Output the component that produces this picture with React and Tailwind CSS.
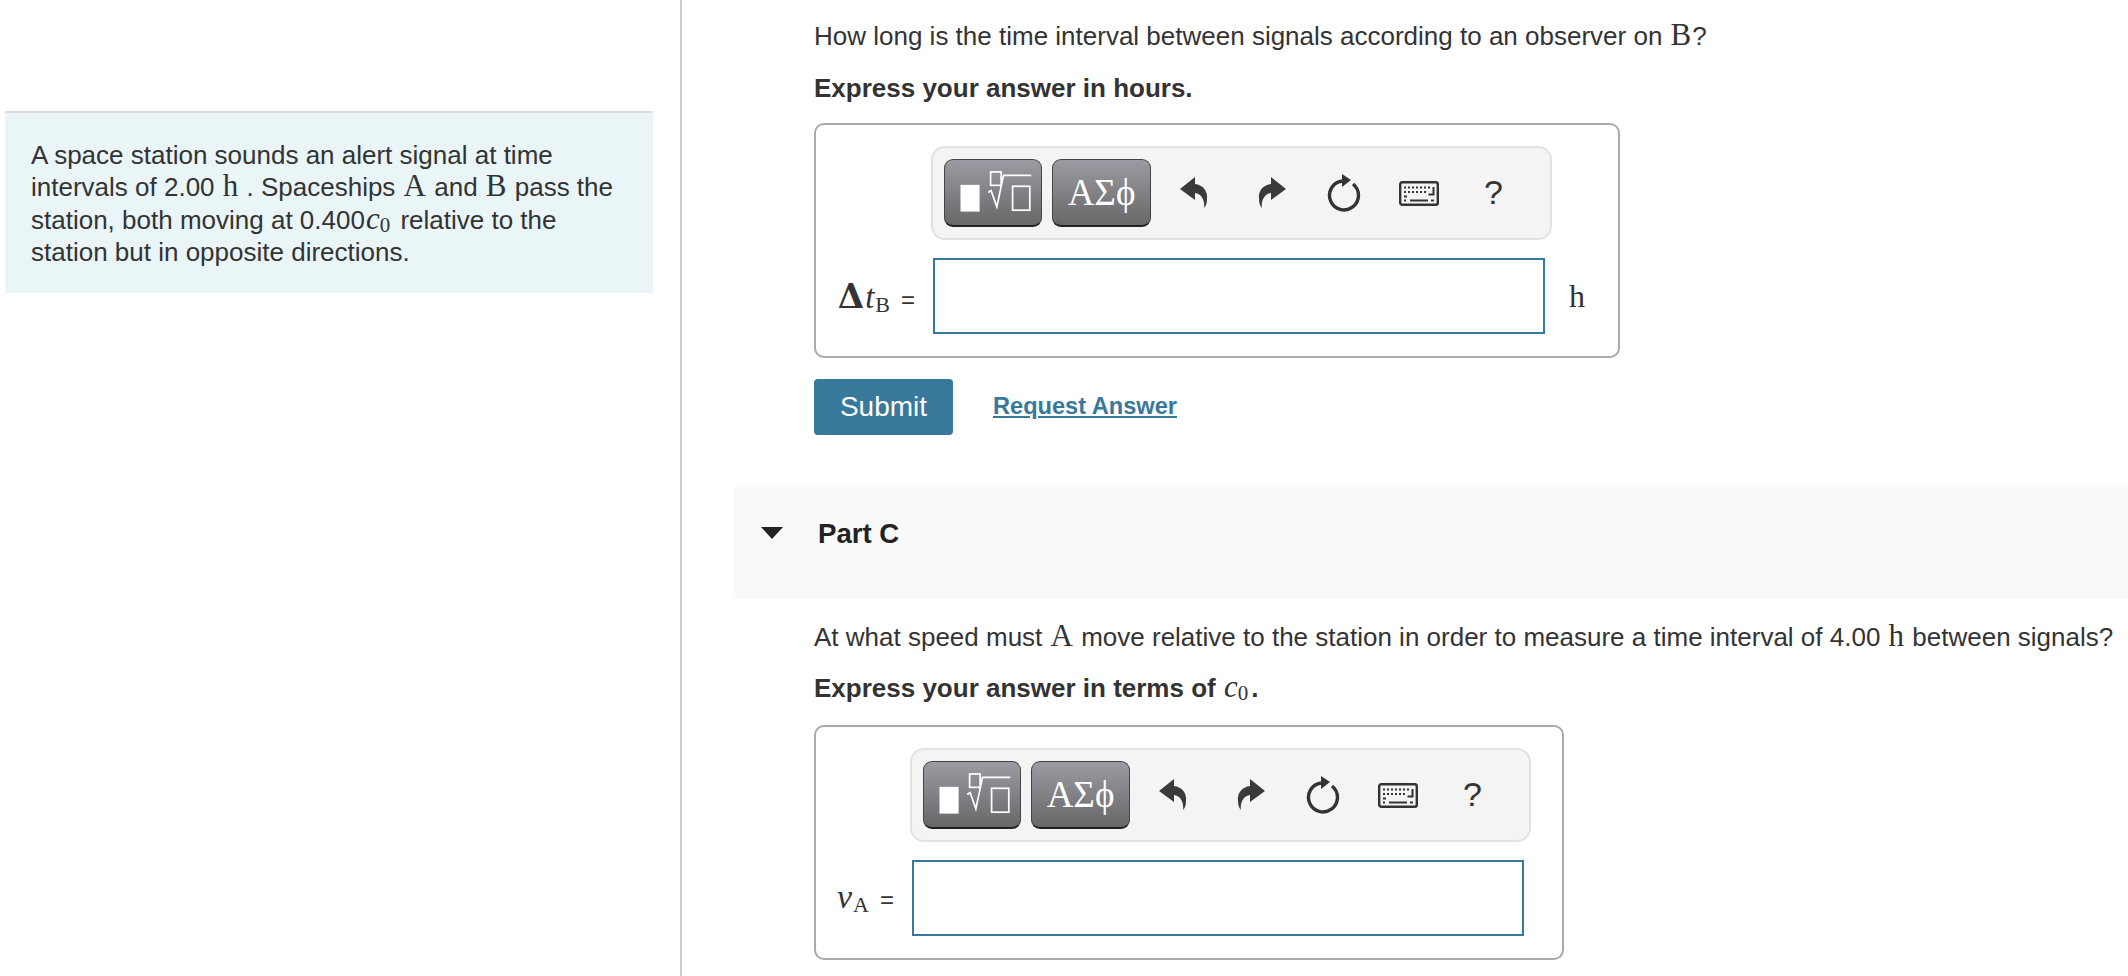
import React from 'react';

const sans = { fontFamily: '"Liberation Sans", Arial, sans-serif' };

// Math bits in the prompt text
const M = ({ children }) => (
  <span className="mx-[1px] font-['Liberation_Serif',serif] text-[31px] font-normal leading-[0]">{children}</span>
);
const C0 = () => (
  <span className="mr-[3px] ml-[1px] font-['Liberation_Serif',serif] text-[31px] font-normal leading-[0]">
    <i>c</i>
    <sub className="-bottom-[3px] text-[21px] leading-[0]">0</sub>
  </span>
);

const FormulaIcon = () => (
  <svg width="96" height="65" viewBox="0 0 98 68" fill="none">
    <rect x="15" y="26" width="20" height="28" fill="#fff" />
    <rect x="46.5" y="12.5" width="11" height="14" stroke="#fff" strokeWidth="1.8" />
    <path d="M44 34l3-2 6 17 7-33h29" stroke="#fff" strokeWidth="1.8" />
    <rect x="69.5" y="27.5" width="18" height="25" stroke="#fff" strokeWidth="1.8" />
  </svg>
);

const Undo = ({ flip }) => (
  <svg width="28" height="32" viewBox="0 0 28 32" className={flip ? 'translate-x-[3px] -scale-x-100' : ''}>
    <path d="M0 12L15 0v7c8 1 13 7 12 15 0 4-1 7-3 9 1-5-1-14-9-15v7z" fill="#3a3a3a" />
  </svg>
);

const Reset = () => (
  <svg width="34" height="38" viewBox="0 0 34 38" fill="none">
    <path d="M15 7A14.5 14.5 0 1 0 26 10" stroke="#333" strokeWidth="3.4" />
    <path d="M15 0l9 6-9 7z" fill="#333" />
  </svg>
);

const KeyboardIcon = () => (
  <svg width="40" height="25" viewBox="0 0 40 25" fill="none">
    <rect x="1.2" y="1.2" width="37.6" height="22.6" rx="2" fill="#f4f4f4" stroke="#333" strokeWidth="2.4" />
    <path d="M5 6.5h28M5 11h24" stroke="#333" strokeWidth="2" strokeDasharray="2 2" />
    <path d="M34.5 6v7.5h-5M5 15.5h3M5 19.5h2M11 19.5h18M32 19.5h3" stroke="#333" strokeWidth="2" />
  </svg>
);

const MathButton = ({ children, w }) => (
  <div
    className={`flex h-[68px] items-center justify-center rounded-[9px] border border-b-2 border-[#444] border-b-[#222] bg-gradient-to-b from-[#9b9ba3] to-[#68686a] ${w}`}
  >
    {children}
  </div>
);

const Slot = ({ children }) => <div className="flex h-full w-[75px] items-center justify-center">{children}</div>;

const AnswerBox = ({ label, unit, width, indent, labelWidth }) => (
  <div className={`rounded-[10px] border-2 border-[#aaa] pt-[21px] pb-[22px] ${width}`}>
    <div className={`flex h-[94px] w-[621px] items-center rounded-[14px] border-2 border-[#e2e2e2] bg-[#f4f4f4] pl-[11px] ${indent}`}>
      <MathButton w="w-[98px]">
        <FormulaIcon />
      </MathButton>
      <div className="w-[10px]" />
      <MathButton w="w-[99px]">
        <span className="font-['Liberation_Serif',serif] text-[37px] leading-none text-white">ΑΣϕ</span>
      </MathButton>
      <div className="ml-[5px] flex h-full items-center">
        <Slot><Undo /></Slot>
        <Slot><Undo flip /></Slot>
        <Slot><Reset /></Slot>
        <Slot><KeyboardIcon /></Slot>
        <Slot><span className="-mt-[2px] text-[34px] text-[#333]">?</span></Slot>
      </div>
    </div>
    <div className="mt-[18px] flex h-[76px] items-center">
      <div className={`flex items-center justify-end pr-[18px] ${labelWidth}`}>{label}</div>
      <div className="h-full w-[612px] border-2 border-[#37789b] bg-white" />
      {unit && <span className="ml-[24px] font-['Liberation_Serif',serif] text-[32px] text-[#333]">{unit}</span>}
    </div>
  </div>
);

export default function App() {
  return (
    <div className="flex h-[976px] w-[2128px] overflow-hidden bg-white text-[26px] text-[#333]" style={sans}>
      {/* left column */}
      <div className="h-full w-[682px] shrink-0 border-r-2 border-[#c3d0dc] pt-[111px] pl-[5px]">
        <div className="h-[182px] w-[648px] border-t-2 border-[#dddddd] bg-[#e9f5f7] pt-[26px] pl-[26px] pr-[20px] text-[26px] leading-[32.4px]">
          A space station sounds an alert signal at time intervals of 2.00 <M>h</M> . Spaceships <M>A</M> and <M>B</M> pass the
          station, both moving at 0.400<C0 /> relative to the station but in opposite directions.
        </div>
      </div>

      {/* right column */}
      <div className="min-w-0 flex-1 pt-[20px]">
        <div className="pl-[132px]">
          <p className="h-[32px] leading-[32px] whitespace-nowrap">
            How long is the time interval between signals according to an observer on <M>B</M>?
          </p>
          <p className="mt-[20px] h-[32px] font-bold leading-[32px]">Express your answer in hours.</p>
          <div className="mt-[19px]">
            <AnswerBox
              width="w-[806px]"
              indent="ml-[115px]"
              labelWidth="w-[117px]"
              unit="h"
              label={
                <span className="flex items-baseline whitespace-nowrap font-['Liberation_Serif',serif] text-[33px] leading-none">
                  <span className="font-['DejaVu_Serif',serif] text-[34px] font-bold">Δ</span>
                  <i className="ml-[1px]">t</i>
                  <span className="relative top-[4px] ml-[1px] text-[22px]">B</span>
                  <span className="ml-[11px] font-['Liberation_Sans',sans-serif] text-[24px]">=</span>
                </span>
              }
            />
          </div>
          <div className="mt-[21px] flex items-center">
            <div className="flex h-[56px] w-[139px] items-center justify-center rounded-[4px] bg-[#37789b] text-[28px] text-white">Submit</div>
            <a className="ml-[40px] text-[23.6px] font-bold text-[#37789b] underline">Request Answer</a>
          </div>
        </div>

        <div className="mt-[52px] ml-[51px] flex h-[112px] bg-[#f9f9f9] pt-[33px]">
          <svg width="22" height="12" viewBox="0 0 22 12" className="mt-[7px] ml-[28px]">
            <path d="M0 0h22L11 12z" fill="#222" />
          </svg>
          <span className="ml-[35px] text-[27.6px] font-bold leading-[28px] text-[#222]">Part C</span>
        </div>

        <div className="pl-[132px]">
          <p className="mt-[22px] h-[32px] whitespace-nowrap leading-[32px]">
            At what speed must <M>A</M> move relative to the station in order to measure a time interval of 4.00 <M>h</M> between signals?
          </p>
          <p className="mt-[19px] h-[32px] font-bold leading-[32px]">
            Express your answer in terms of <C0 />.
          </p>
          <div className="mt-[21px]">
            <AnswerBox
              width="w-[750px]"
              indent="ml-[94px]"
              labelWidth="w-[96px]"
              label={
                <span className="-mt-[2px] flex items-baseline whitespace-nowrap font-['Liberation_Serif',serif] text-[34px] leading-none">
                  <i>v</i>
                  <span className="relative top-[4px] ml-[1px] text-[22px]">A</span>
                  <span className="ml-[11px] font-['Liberation_Sans',sans-serif] text-[24px]">=</span>
                </span>
              }
            />
          </div>
        </div>
      </div>
    </div>
  );
}
